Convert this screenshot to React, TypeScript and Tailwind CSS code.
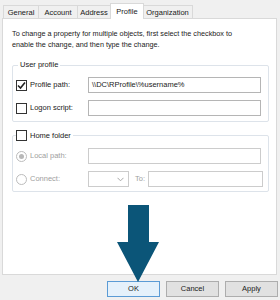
import React from "react"

const font = { fontFamily: '"Liberation Sans", Arial, sans-serif' }

function Tab({ label, width, active }: { label: string; width: string; active?: boolean }) {
  if (active) {
    return (
      <div
        className={`${width} relative z-10 -mx-px -mb-px h-[16px] border border-b-0 border-[#d9d9d9] bg-white flex items-start justify-center pt-[4px] text-[#1a1a1a]`}
      >
        {label}
      </div>
    )
  }
  return (
    <div
      className={`${width} h-[13px] border border-b-0 border-[#d9d9d9] bg-[#f0f0f0] flex items-center justify-center pt-px text-[#1a1a1a] -ml-px first:ml-0`}
    >
      {label}
    </div>
  )
}

function Check({ checked }: { checked?: boolean }) {
  return (
    <span className="w-[11px] h-[11px] border border-[#333] bg-white flex items-center justify-center shrink-0">
      {checked && (
        <svg width="9" height="9" viewBox="0 0 9 9">
          <path d="M1 4.5 L3.5 7 L8 1.5" fill="none" stroke="#222" strokeWidth="1.6" />
        </svg>
      )}
    </span>
  )
}

function Radio({ checked }: { checked?: boolean }) {
  return (
    <span className="w-[11px] h-[11px] rounded-full border border-[#bcbcbc] bg-white flex items-center justify-center shrink-0">
      {checked && <span className="w-[5px] h-[5px] rounded-full bg-[#b8b8b8]" />}
    </span>
  )
}

function Field({ value, disabled, className }: { value?: string; disabled?: boolean; className?: string }) {
  return (
    <div
      className={`h-[16px] border ${disabled ? "border-[#cccccc]" : "border-[#b5b5b5]"} bg-white flex items-center px-[3px] text-[#1a1a1a] ${className ?? ""}`}
    >
      {value}
    </div>
  )
}

function Button({ label, focused }: { label: string; focused?: boolean }) {
  return (
    <div
      className={`w-[53px] h-[16px] border flex items-center justify-center text-[#1a1a1a] ${
        focused ? "border-[#5b9bd5] bg-[#e5f1fb]" : "border-[#adadad] bg-[#e1e1e1]"
      }`}
    >
      {label}
    </div>
  )
}

export default function App() {
  return (
    <div
      className="relative w-[280px] h-[300px] overflow-hidden bg-[#f0f0f0] text-[7.5px] leading-none whitespace-nowrap"
      style={font}
    >
      {/* Tabs */}
      <div className="flex items-end pl-[3px] pt-[3px]">
        <Tab label="General" width="w-[36px]" />
        <Tab label="Account" width="w-[40px]" />
        <Tab label="Address" width="w-[34px]" />
        <Tab label="Profile" width="w-[34px]" active />
        <Tab label="Organization" width="w-[51px]" />
      </div>

      {/* Panel */}
      <div className="ml-[2px] w-[275px] h-[257px] border border-[#d9d9d9] bg-white px-[9px] pt-[9px]">
        <p className="text-[#1a1a1a] text-[7.25px] leading-[11px]">
          To change a property for multiple objects, first select the checkbox to
          <br />
          enable the change, and then type the change.
        </p>

        {/* User profile */}
        <div className="relative mt-[15px] w-[257px] h-[57px] border border-[#dde3ea] rounded-[2px] px-[3px] pt-[11px]">
          <span className="absolute -top-[5px] left-[5px] bg-white px-[2px] text-[#1a1a1a]">User profile</span>
          <div className="flex items-center h-[16px]">
            <Check checked />
            <span className="ml-[3px] w-[58px] text-[#1a1a1a]">Profile path:</span>
            <Field value="\\DC\RProfile\%username%" className="w-[173px]" />
          </div>
          <div className="flex items-center h-[16px] mt-[7px]">
            <Check />
            <span className="ml-[3px] w-[58px] text-[#1a1a1a]">Logon script:</span>
            <Field className="w-[173px]" />
          </div>
        </div>

        {/* Home folder */}
        <div className="relative mt-[13px] w-[257px] h-[57px] border border-[#dde3ea] rounded-[2px] px-[3px] pt-[12px]">
          <span className="absolute -top-[6px] left-[3px] bg-white pr-[2px] flex items-center gap-[3px] text-[#1a1a1a]">
            <Check />
            Home folder
          </span>
          <div className="flex items-center h-[16px]">
            <Radio checked />
            <span className="ml-[3px] w-[58px] text-[#a0a0a0]">Local path:</span>
            <Field disabled className="w-[173px]" />
          </div>
          <div className="flex items-center h-[16px] mt-[7px]">
            <Radio />
            <span className="ml-[3px] w-[58px] text-[#a0a0a0]">Connect:</span>
            <div className="w-[41px] h-[16px] border border-[#cccccc] bg-white flex items-center justify-end pr-[4px]">
              <svg width="7" height="5" viewBox="0 0 7 5">
                <path d="M0.5 0.8 L3.5 3.8 L6.5 0.8" fill="none" stroke="#a8a8a8" strokeWidth="1" />
              </svg>
            </div>
            <span className="ml-[6px] w-[12px] text-[#a0a0a0]">To:</span>
            <Field disabled className="ml-[1px] w-[115px]" />
          </div>
        </div>
      </div>

      {/* Buttons */}
      <div className="flex justify-end gap-[6px] pr-[2px] pt-[6px]">
        <Button label="OK" focused />
        <Button label="Cancel" />
        <Button label="Apply" />
      </div>

      {/* Annotation arrow */}
      <svg className="absolute left-[116px] top-[204px]" width="44" height="80" viewBox="0 0 44 80">
        <path d="M12 1 H33 V38 H43 L22 78 L1 38 H12 Z" fill="#0b5578" />
      </svg>
    </div>
  )
}
